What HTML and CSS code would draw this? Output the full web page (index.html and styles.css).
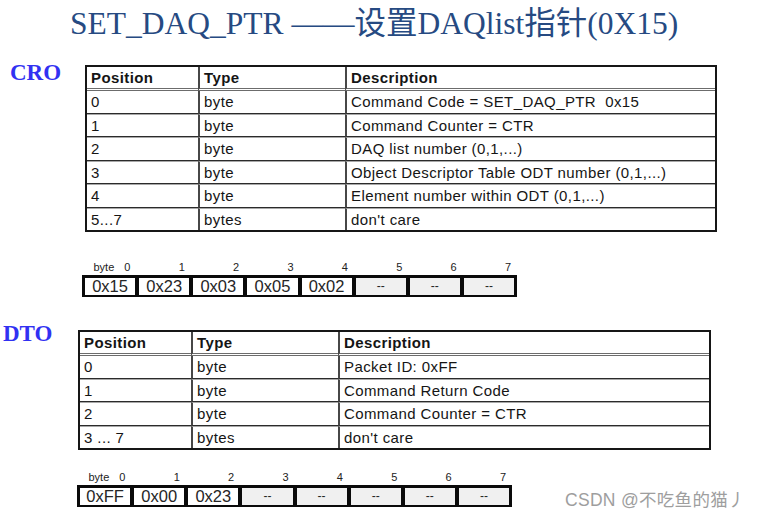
FILE: index.html
```html
<!DOCTYPE html>
<html>
<head>
<meta charset="utf-8">
<link rel="stylesheet" href="styles.css">
</head>
<body>
<div class="page">
  <h1 class="title">SET_DAQ_PTR ——设置DAQlist指针(0X15)</h1>

  <section class="sec sec-cro">
    <div class="tag">CRO</div>
    <table class="tbl">
      <colgroup><col class="c1"><col class="c2"><col class="c3"></colgroup>
      <thead><tr><th>Position</th><th>Type</th><th>Description</th></tr></thead>
      <tbody>
        <tr><td>0</td><td>byte</td><td>Command Code = SET_DAQ_PTR&nbsp; 0x15</td></tr>
        <tr><td>1</td><td>byte</td><td>Command Counter = CTR</td></tr>
        <tr><td>2</td><td>byte</td><td>DAQ list number (0,1,...)</td></tr>
        <tr><td>3</td><td>byte</td><td>Object Descriptor Table ODT number (0,1,...)</td></tr>
        <tr><td>4</td><td>byte</td><td>Element number within ODT (0,1,...)</td></tr>
        <tr><td>5...7</td><td>bytes</td><td>don't care</td></tr>
      </tbody>
    </table>
  </section>

  <div class="strip strip-cro">
    <div class="labels">
      <span class="lb"><span class="word">byte</span>0</span>
      <span class="lb">1</span><span class="lb">2</span><span class="lb">3</span>
      <span class="lb">4</span><span class="lb">5</span><span class="lb">6</span><span class="lb">7</span>
    </div>
    <div class="boxes">
      <span class="box">0x15</span><span class="box">0x23</span><span class="box">0x03</span>
      <span class="box">0x05</span><span class="box">0x02</span>
      <span class="box empty">--</span><span class="box empty">--</span><span class="box empty">--</span>
    </div>
  </div>

  <section class="sec sec-dto">
    <div class="tag">DTO</div>
    <table class="tbl">
      <colgroup><col class="c1"><col class="c2"><col class="c3"></colgroup>
      <thead><tr><th>Position</th><th>Type</th><th>Description</th></tr></thead>
      <tbody>
        <tr><td>0</td><td>byte</td><td>Packet ID: 0xFF</td></tr>
        <tr><td>1</td><td>byte</td><td>Command Return Code</td></tr>
        <tr><td>2</td><td>byte</td><td>Command Counter = CTR</td></tr>
        <tr><td>3 ... 7</td><td>bytes</td><td>don't care</td></tr>
      </tbody>
    </table>
  </section>

  <div class="strip strip-dto">
    <div class="labels">
      <span class="lb"><span class="word">byte</span>0</span>
      <span class="lb">1</span><span class="lb">2</span><span class="lb">3</span>
      <span class="lb">4</span><span class="lb">5</span><span class="lb">6</span><span class="lb">7</span>
    </div>
    <div class="boxes">
      <span class="box">0xFF</span><span class="box">0x00</span><span class="box">0x23</span>
      <span class="box empty">--</span><span class="box empty">--</span><span class="box empty">--</span>
      <span class="box empty">--</span><span class="box empty">--</span>
    </div>
  </div>

  <div class="watermark">CSDN @不吃鱼的猫丿</div>
</div>
</body>
</html>
```

FILE: styles.css
```css
html, body {
  margin: 0;
  padding: 0;
  background: #ffffff;
}

.page {
  position: relative;
  width: 760px;
  height: 521px;
  overflow: hidden;
}

.title {
  margin: 0;
  padding: 4px 0 15px 70px;
  height: 40px;
  font-family: "Liberation Serif", "Noto Sans CJK SC", serif;
  font-weight: normal;
  font-size: 31.5px;
  line-height: 40px;
  color: #264a82;
  white-space: nowrap;
}

.sec {
  display: flex;
  align-items: flex-start;
}

.sec-cro { padding-left: 10px; }
.sec-dto { padding-left: 3px; margin-top: 21px; }

.tag {
  width: 75px;
  margin-top: 2px;
  font-family: "Liberation Serif", serif;
  font-weight: bold;
  font-size: 23px;
  line-height: 23px;
  color: #3131f2;
}

.sec-dto .tag { margin-top: 4px; }

.sec-cro .tbl { margin-top: 6px; }
.sec-dto .tbl { margin-top: 12px; }

.tbl {
  border-collapse: separate;
  border-spacing: 0;
  table-layout: fixed;
  border: 2px solid #161616;
  font-family: "Liberation Sans", Arial, sans-serif;
  font-size: 15px;
  letter-spacing: 0.4px;
  color: #151515;
}

.sec-cro .tbl { width: 632px; }
.sec-dto .tbl { width: 633px; }

.tbl col.c1 { width: 111px; }
.tbl col.c2 { width: 147px; }

.tbl th,
.tbl td {
  padding: 0 0 0 4px;
  text-align: left;
  white-space: nowrap;
  overflow: hidden;
}

.tbl th + th,
.tbl td + td {
  border-left: 2px solid #474747;
}

.tbl th {
  height: 21px;
  line-height: 21px;
  font-weight: bold;
  border-bottom: 3px double #6c6c6c;
}

.tbl td {
  height: 21.5px;
  line-height: 21.5px;
  border-bottom: 1px solid #2b2b2b;
}

.tbl tbody tr + tr td {
  border-top: 1px solid #a8a8a8;
}

.tbl tbody tr:last-child td {
  border-bottom: none;
}

.strip {
  width: 435px;
}

.strip-cro { margin: 29px 0 0 82px; }
.strip-dto { margin: 21px 0 0 77px; }

.labels {
  display: grid;
  grid-template-columns: repeat(8, 1fr);
  height: 14px;
  font-family: "Liberation Sans", Arial, sans-serif;
  font-size: 11px;
  line-height: 13px;
  color: #222;
}

.lb {
  text-align: right;
  padding-right: 6px;
}

.lb .word {
  margin-right: 10px;
}

.boxes {
  display: grid;
  grid-template-columns: repeat(8, 1fr);
  column-gap: 4px;
  padding: 3px 3px 2px 3px;
  background: #0a0a0a;
}

.box {
  height: 17px;
  background: #ffffff;
  text-align: center;
  font-family: "Liberation Sans", Arial, sans-serif;
  font-size: 16.5px;
  line-height: 17px;
  color: #262626;
}

.box.empty {
  background: #f0f0f0;
  font-size: 12px;
}

.watermark {
  position: absolute;
  left: 565px;
  top: 489px;
  font-family: "Liberation Sans", "Noto Sans CJK SC", sans-serif;
  font-size: 17.5px;
  line-height: 22px;
  letter-spacing: 0.3px;
  color: #9e9e9e;
  white-space: nowrap;
}
```
